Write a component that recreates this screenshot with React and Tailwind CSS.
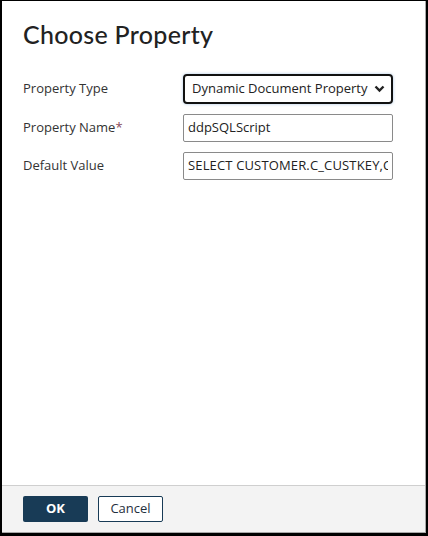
import React from "react";

export default function App() {
  const body = { fontFamily: '"Open Sans", "Liberation Sans", sans-serif' };
  return (
    <div className="w-[428px] h-[536px] bg-black pt-px pl-[2px] pr-[2px] pb-[3px]" style={body}>
      <div className="flex flex-col h-full bg-white border-r border-b border-[#a8a8a8]">
        <div className="flex-1 pl-[21px]">
          <h1
            className="pt-[17px] text-[25px] leading-[32px] font-medium text-[#222] tracking-[0.3px]"
            style={{ fontFamily: '"Lato", "Open Sans", sans-serif' }}
          >
            Choose Property
          </h1>
          <div className="mt-[24px] flex flex-col gap-[10px] text-[13px] text-[#333]">
            <div className="flex items-center">
              <div className="w-[160px]">Property Type</div>
              <div className="w-[210px] h-[30px] border-2 border-[#111] rounded-[4px] shadow-[0_0_3px_rgba(80,140,200,0.5)] flex items-center pl-[7px] pr-[6px]">
                <span className="flex-1 whitespace-nowrap overflow-hidden text-[#222]">Dynamic Document Property</span>
                <svg width="11" height="8" viewBox="0 0 11 8" className="ml-[3px] shrink-0">
                  <polyline points="1.5,1.5 5.5,5.5 9.5,1.5" fill="none" stroke="#222" strokeWidth="2.4" />
                </svg>
              </div>
            </div>
            <div className="flex items-center">
              <div className="w-[160px]">
                Property Name<span className="text-[#8a4b5a]">*</span>
              </div>
              <div className="w-[210px] h-[28px] border border-[#8a8a8a] rounded-[2px] flex items-center pl-[4px] pr-[4px] text-[#222]">
                ddpSQLScript
              </div>
            </div>
            <div className="flex items-center">
              <div className="w-[160px]">Default Value</div>
              <div className="w-[210px] h-[28px] border border-[#8a8a8a] rounded-[2px] flex items-center pl-[4px] pr-[4px] text-[#222]">
                <span className="flex-1 whitespace-nowrap overflow-hidden tracking-[0.15px]">
                  SELECT CUSTOMER.C_CUSTKEY,CUSTOMER.C_NAME
                </span>
              </div>
            </div>
          </div>
        </div>
        <div className="h-[47px] border-t border-[#cfcfcf] bg-[#f3f3f3] flex items-start pt-[10px] pl-[21px] gap-[10px]">
          <button className="w-[65px] h-[26px] bg-[#183b56] rounded-[2px] text-white text-[13px] font-bold">
            OK
          </button>
          <button className="w-[65px] h-[26px] bg-white border border-[#183b56] rounded-[2px] text-[#1f2f3d] text-[13px]">
            Cancel
          </button>
        </div>
      </div>
    </div>
  );
}
